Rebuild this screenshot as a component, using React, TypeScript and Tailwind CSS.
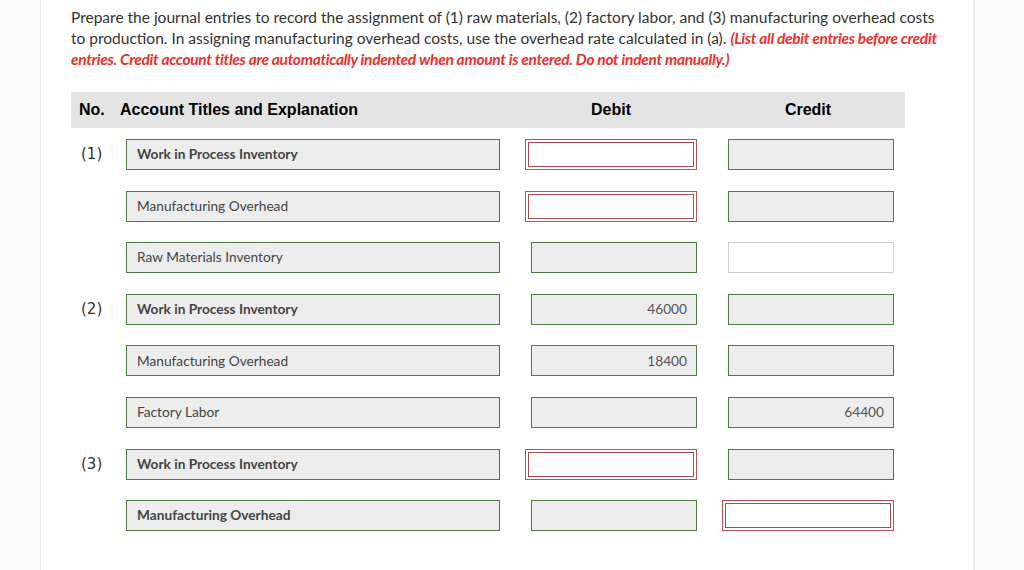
import React from "react";

// Journal entry worksheet: account titles with debit/credit amount fields.
// Cell states: "ok" (green, filled), "bad" (red double outline, empty), "blank" (grey outline).

type Cell = { state: "ok" | "bad" | "blank"; value?: string };

type Row = {
  no?: string;
  account: string;
  bold?: boolean;
  debit: Cell;
  credit: Cell;
};

const rows: Row[] = [
  { no: "(1)", account: "Work in Process Inventory", bold: true, debit: { state: "bad" }, credit: { state: "ok" } },
  { account: "Manufacturing Overhead", debit: { state: "bad" }, credit: { state: "ok" } },
  { account: "Raw Materials Inventory", debit: { state: "ok" }, credit: { state: "blank" } },
  { no: "(2)", account: "Work in Process Inventory", bold: true, debit: { state: "ok", value: "46000" }, credit: { state: "ok" } },
  { account: "Manufacturing Overhead", debit: { state: "ok", value: "18400" }, credit: { state: "ok" } },
  { account: "Factory Labor", debit: { state: "ok" }, credit: { state: "ok", value: "64400" } },
  { no: "(3)", account: "Work in Process Inventory", bold: true, debit: { state: "bad" }, credit: { state: "ok" } },
  { account: "Manufacturing Overhead", bold: true, debit: { state: "ok" }, credit: { state: "bad" } },
];

const lato = "font-['Lato','Noto_Sans',sans-serif]";

function Amount({ cell }: { cell: Cell }) {
  if (cell.state === "bad") {
    return (
      <div className="h-[31px] w-[172px] border border-[#b25553] p-[2px]">
        <div className="h-full w-full border border-[#a5504e] bg-white" />
      </div>
    );
  }
  const tone =
    cell.state === "ok"
      ? "border-[#4c7c42] bg-[#ededed]"
      : "border-[#cfcfcf] bg-white";
  return (
    <div
      className={`ml-[6px] flex h-[31px] w-[166px] items-center justify-end border pr-[9px] text-[13.7px] text-[#555] ${tone}`}
    >
      {cell.value}
    </div>
  );
}

export default function App() {
  return (
    <div className={`flex h-[570px] w-[1024px] overflow-hidden bg-[#fafafa] ${lato}`}>
      <div className="w-[41px] shrink-0 border-r border-[#e8e8e8]" />
      <div className="w-[932px] shrink-0 bg-white pl-[30px] pr-[20px] pt-[7px]">
        <p className="text-[15.5px] leading-[21px] text-[#333]">
          Prepare the journal entries to record the assignment of (1) raw materials, (2) factory labor, and (3) manufacturing overhead costs
          <br />
          to production. In assigning manufacturing overhead costs, use the overhead rate calculated in (a).{" "}
          <span className="font-bold italic tracking-[-0.3px] text-[#e8322c]">
            (List all debit entries before credit
            <br />
            entries. Credit account titles are automatically indented when amount is entered. Do not indent manually.)
          </span>
        </p>

        <div className="mt-[22px] flex h-[36px] w-[834px] items-center bg-[#e4e4e4] font-['Liberation_Sans',Arial,sans-serif] text-[16px] font-bold text-black">
          <div className="w-[49px] pl-[8px]">No.</div>
          <div className="w-[405px]">Account Titles and Explanation</div>
          <div className="w-[172px] text-center">Debit</div>
          <div className="ml-[25px] w-[172px] text-center">Credit</div>
        </div>

        <div className="mt-[11px] flex flex-col gap-[20.6px]">
          {rows.map((r, i) => (
            <div key={i} className="flex h-[31px] items-center">
              <div className="w-[55px] pl-[10px] font-['DejaVu_Sans',sans-serif] text-[15px] text-[#333]">{r.no}</div>
              <div
                className={`flex h-[31px] w-[374px] items-center border border-[#4c7c42] bg-[#ededed] pl-[10px] text-[13.7px] text-[#444] ${
                  r.bold ? "font-bold" : ""
                }`}
              >
                {r.account}
              </div>
              <div className="ml-[25px]">
                <Amount cell={r.debit} />
              </div>
              <div className="ml-[25px]">
                <Amount cell={r.credit} />
              </div>
            </div>
          ))}
        </div>
      </div>
      <div className="flex-1 border-l-2 border-[#ececec]" />
    </div>
  );
}
